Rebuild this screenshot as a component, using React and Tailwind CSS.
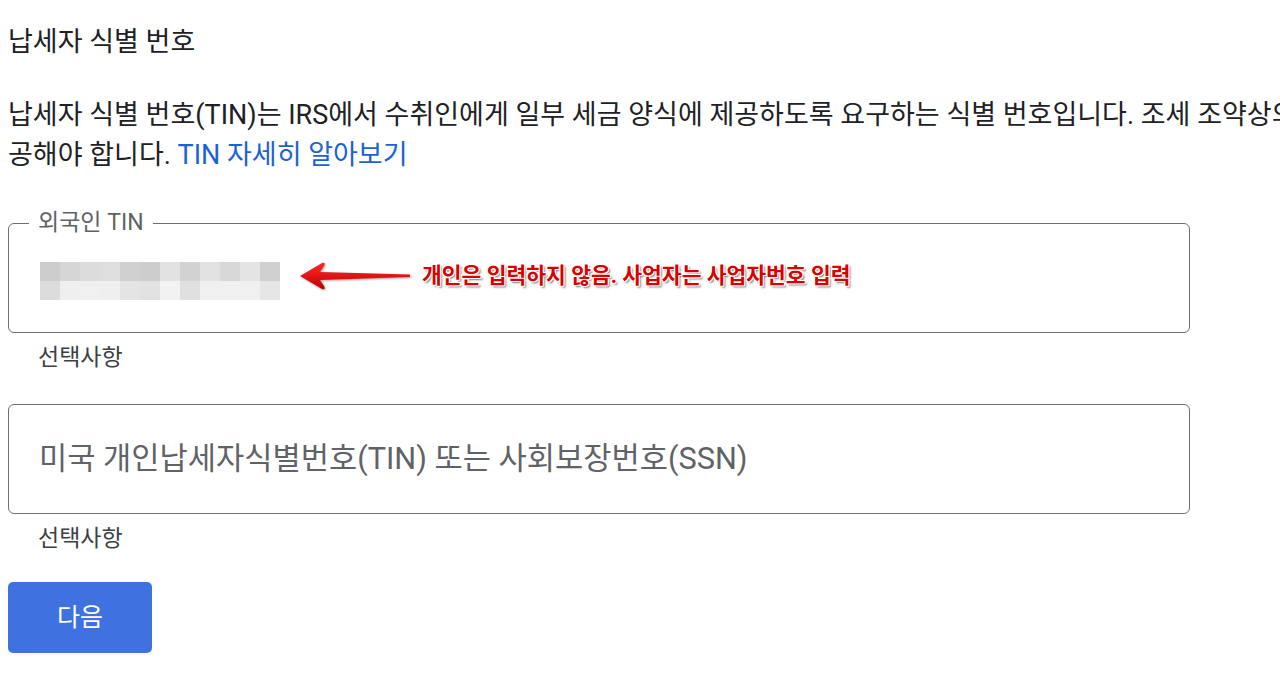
const mosaic = [
    ['#cccccc', '#d6d6d6', '#dcdcdc', '#dedede', '#d0d0d0', '#cdcdcd', '#e2e2e2', '#d2d2d2', '#e2e2e2', '#d8d8d8', '#e4e4e4', '#d0d0d0'],
    ['#dcdcdc', '#efefef', '#f0f0f0', '#efefef', '#e4e4e4', '#e2e2e2', '#f2f2f2', '#e0e0e0', '#f0f0f0', '#f0f0f0', '#f0f0f0', '#e6e6e6'],
];

function Mosaic() {
    return (
        <div className="flex flex-col">
            {mosaic.map((row, i) => (
                <div key={i} className="flex">
                    {row.map((c, j) => (
                        <div key={j} className="h-[19px] w-[20px]" style={{ backgroundColor: c }} />
                    ))}
                </div>
            ))}
        </div>
    );
}

function Arrow() {
    return (
        <svg width="116" height="30" viewBox="0 0 116 30" className="drop-shadow-[1px_1px_1px_rgba(0,0,0,0.35)]">
            <defs>
                <linearGradient id="arrowFill" x1="0" y1="0" x2="0" y2="1">
                    <stop offset="0" stopColor="#ff2a2a" />
                    <stop offset="1" stopColor="#c00000" />
                </linearGradient>
            </defs>
            <path
                d="M2 15 L24 2 Q28 1 26 5 L22 11 L112 13.5 L112 16 L22 19 L26 25 Q28 29 24 28 Z"
                fill="url(#arrowFill)"
            />
        </svg>
    );
}

function Helper() {
    return <div className="mt-[9px] pl-[30px] text-[23px] leading-[32px] text-[#3c4043]">선택사항</div>;
}

export default function App() {
    return (
        <div className="min-h-[678px] w-full overflow-hidden bg-white font-['Roboto','Noto_Sans_CJK_KR',sans-serif] text-[#202124]">
            <div className="px-[8px] pt-[24px]">
                <h1 className="text-[27px] leading-[36px] font-normal">납세자 식별 번호</h1>

                <p className="mt-[35px] text-[27px] leading-[40px] whitespace-nowrap">
                    납세자 식별 번호(TIN)는 IRS에서 수취인에게 일부 세금 양식에 제공하도록 요구하는 식별 번호입니다. 조세 조약상의 혜택을 청구하려면 외국 TIN을 제
                    <br />
                    공해야 합니다.{' '}
                    <a href="#" className="text-[#1a62d6]">TIN 자세히 알아보기</a>
                </p>

                <div className="relative mt-[48px] flex h-[110px] w-[1182px] items-center rounded-[6px] border-[1.5px] border-[#6f6f6f] pl-[31px]">
                    <span className="absolute -top-[16px] left-[20px] bg-white px-[9px] text-[23px] leading-[30px] text-[#5f6368]">
                        외국인 TIN
                    </span>
                    <div className="mt-[6px]">
                        <Mosaic />
                    </div>
                    <div className="absolute top-[37px] left-[289px] flex items-center gap-[8px]">
                        <Arrow />
                        <span className="text-[21.5px] font-bold leading-[28px] text-[#d80000] [text-shadow:1px_1px_0_#fff,-1px_-1px_0_#fff,1px_-1px_0_#fff,-1px_1px_0_#fff,2px_2px_2px_#777]">
                            개인은 입력하지 않음. 사업자는 사업자번호 입력
                        </span>
                    </div>
                </div>
                <Helper />

                <div className="mt-[30px] flex h-[110px] w-[1182px] items-center rounded-[6px] border-[1.5px] border-[#6f6f6f] pl-[30px]">
                    <span className="text-[30.7px] leading-[40px] text-[#5f6368]">
                        미국 개인납세자식별번호(TIN) 또는 사회보장번호(SSN)
                    </span>
                </div>
                <Helper />

                <button className="mt-[27px] flex h-[71px] w-[144px] items-center justify-center rounded-[5px] bg-[#3f71e0] text-[25px] text-white">
                    다음
                </button>
            </div>
        </div>
    );
}
